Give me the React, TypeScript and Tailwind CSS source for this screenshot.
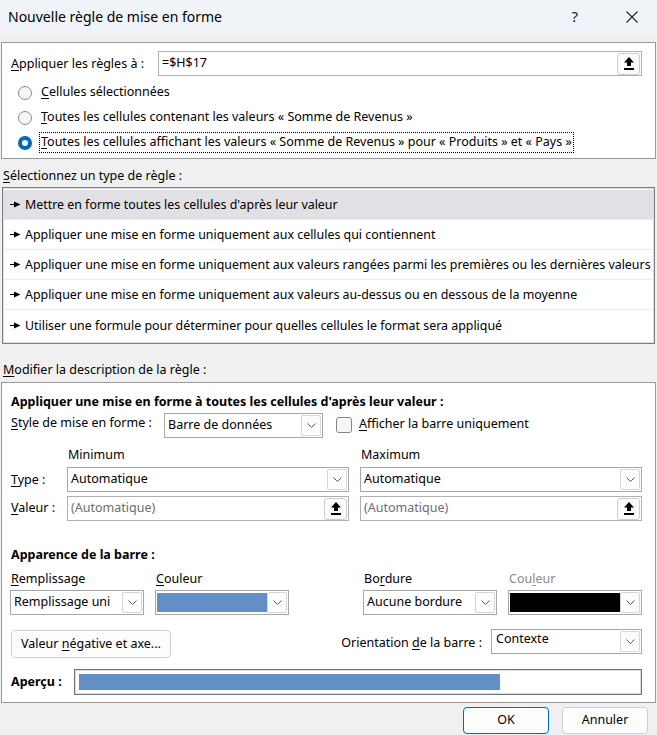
import React from "react";

const U = ({ children }: { children: React.ReactNode }) => <span className="underline underline-offset-2">{children}</span>;

function Chevron() {
  return (
    <svg width="9" height="5" viewBox="0 0 9 5">
      <polyline points="0.5,0.5 4.5,4.5 8.5,0.5" fill="none" stroke="#5a5a5a" strokeWidth="1" />
    </svg>
  );
}

function DropBtn() {
  return (
    <div className="mr-[1px] flex h-[21px] w-[20px] shrink-0 items-center justify-center rounded-[2px] border border-[#d6d6d6] bg-[#fdfdfd]">
      <Chevron />
    </div>
  );
}

function UploadIcon() {
  return (
    <svg width="10" height="13" viewBox="0 0 10 13">
      <polygon points="5,0 10,5.5 7,5.5 7,9 3,9 3,5.5 0,5.5" fill="#000" />
      <rect x="0" y="11" width="10" height="2" fill="#000" />
    </svg>
  );
}

function UploadBtn() {
  return (
    <div className="mr-[1px] flex h-[22px] w-[23px] shrink-0 items-center justify-center rounded-[3px] border border-[#cdcdcd] bg-[#fbfbfb]">
      <UploadIcon />
    </div>
  );
}

function Select({ className, children, pad = "pl-[3px]" }: { className: string; children: React.ReactNode; pad?: string }) {
  return (
    <div className={`flex h-[25px] shrink-0 items-center border border-[#a7a7a7] bg-white ${className}`}>
      <div className={`flex h-full min-w-0 flex-1 items-center whitespace-nowrap ${pad}`}>{children}</div>
      <DropBtn />
    </div>
  );
}

function RefInput({ className, text, muted }: { className: string; text: string; muted?: boolean }) {
  return (
    <div className={`flex h-[25px] shrink-0 items-center border border-[#b0b0b0] bg-white ${className}`}>
      <div className={`flex-1 pl-[3px] ${muted ? "text-[#6e6e6e]" : ""}`}>{text}</div>
      <UploadBtn />
    </div>
  );
}

function Radio({ checked }: { checked?: boolean }) {
  return checked ? (
    <div className="flex h-[14px] w-[14px] shrink-0 items-center justify-center rounded-full bg-[#0067c0]">
      <div className="h-[6px] w-[6px] rounded-full bg-white" />
    </div>
  ) : (
    <div className="h-[14px] w-[14px] shrink-0 rounded-full border border-[#8a8a8a] bg-[#f6f6f6]" />
  );
}

function RuleArrow() {
  return (
    <svg width="11" height="7" viewBox="0 0 11 7" className="shrink-0">
      <rect x="0" y="3" width="5" height="1" fill="#000" />
      <polygon points="4,0.5 10.5,3.5 4,6.5" fill="#000" />
    </svg>
  );
}

const rules = [
  "Mettre en forme toutes les cellules d'après leur valeur",
  "Appliquer une mise en forme uniquement aux cellules qui contiennent",
  "Appliquer une mise en forme uniquement aux valeurs rangées parmi les premières ou les dernières valeurs",
  "Appliquer une mise en forme uniquement aux valeurs au-dessus ou en dessous de la moyenne",
  "Utiliser une formule pour déterminer pour quelles cellules le format sera appliqué",
];

export default function App() {
  return (
    <div className="flex h-[735px] w-[657px] flex-col overflow-hidden bg-[#f0f0f0] font-['Noto_Sans',sans-serif] text-[12.5px] leading-none text-black">
      {/* title bar */}
      <div className="flex h-[33px] shrink-0 items-center bg-[#f0f4f9] pl-[8px]">
        <div className="text-[14px]">Nouvelle règle de mise en forme</div>
        <div className="ml-auto mr-[48px] text-[15px] text-[#222]">?</div>
        <svg width="12" height="12" viewBox="0 0 12 12" className="mr-[19px]">
          <path d="M0.5 0.5 L11.5 11.5 M11.5 0.5 L0.5 11.5" stroke="#222" strokeWidth="1.1" />
        </svg>
      </div>

      {/* apply to */}
      <div className="ml-[1px] mt-[9px] flex w-[655px] flex-col border border-[#999] bg-white pb-[3px]">
        <div className="mt-[8px] flex items-center pl-[9px]">
          <div className="w-[147px] translate-y-[1px]">
            <U>A</U>ppliquer les règles à :
          </div>
          <RefInput className="w-[484px]" text="=$H$17" />
        </div>
        <div className="mt-[4px] flex h-[25px] items-center pl-[16px]">
          <Radio />
          <span className="ml-[9px]">
            <U>C</U>ellules sélectionnées
          </span>
        </div>
        <div className="flex h-[25px] items-center pl-[16px]">
          <Radio />
          <span className="ml-[9px]">
            <U>T</U>outes les cellules contenant les valeurs « Somme de Revenus »
          </span>
        </div>
        <div className="flex h-[25px] items-center pl-[16px]">
          <Radio checked />
          <span className="ml-[7px] border border-dotted border-black px-[1px] py-[3px]">
            <U>T</U>outes les cellules affichant les valeurs « Somme de Revenus » pour « Produits » et « Pays »
          </span>
        </div>
      </div>

      <div className="mt-[7px] flex h-[21px] items-center pl-[3px]">
        <span>
          <U>S</U>électionnez un type de règle :
        </span>
      </div>
      <div className="ml-[2px] w-[653px] border border-[#7d7d7d]">
        <div className="border border-[#dedede] bg-white pb-[2px] pt-[1px]">
          {rules.map((r, i) => (
            <div
              key={i}
              className={`flex h-[30px] items-center gap-[4px] whitespace-nowrap pl-[6px] text-[12.4px] ${i === 0 ? "bg-[#e1e1e5]" : "bg-white"} ${i < 4 ? "border-b border-[#ececec]" : ""}`}
            >
              <RuleArrow />
              <span className="translate-y-[1px]">{r}</span>
            </div>
          ))}
        </div>
      </div>

      <div className="mt-[16px] flex h-[20px] items-center pl-[3px]">
        <span>
          <U>M</U>odifier la description de la règle :
        </span>
      </div>

      {/* description */}
      <div className="ml-[1px] mt-[2px] flex w-[655px] flex-col border border-[#999] bg-white pb-[7px]">
        <div className="mt-[10px] flex h-[18px] items-center pl-[9px] font-bold">
          <span>Appliquer une mise en forme à toutes les cellules d'après leur valeur :</span>
        </div>
        <div className="mt-[2px] flex items-center pl-[9px]">
          <div className="w-[153px] -translate-y-[2px]">
            <U>S</U>tyle de mise en forme :
          </div>
          <Select className="w-[159px]">
            <span>Barre de données</span>
          </Select>
          <div className="ml-[13px] h-[16px] w-[16px] -translate-y-[1px] rounded-[3px] border border-[#858585] bg-[#f7f7f7]" />
          <span className="ml-[7px] -translate-y-[1px]">
            <U>A</U>fficher la barre uniquement
          </span>
        </div>
        <div className="mt-[8px] flex h-[18px] items-center pl-[65px]">
          <div className="w-[293px] pl-[1px]">Minimum</div>
          <div className="pl-[1px]">Maximum</div>
        </div>
        <div className="mt-[3px] flex items-center pl-[9px]">
          <div className="w-[56px] translate-y-[1px]">
            <U>T</U>ype :
          </div>
          <Select className="w-[282px]">Automatique</Select>
          <Select className="ml-[11px] w-[282px]">Automatique</Select>
        </div>
        <div className="mt-[4px] flex items-center pl-[9px]">
          <div className="w-[56px]">
            <U>V</U>aleur :
          </div>
          <RefInput className="w-[282px]" text="(Automatique)" muted />
          <RefInput className="ml-[11px] w-[282px]" text="(Automatique)" muted />
        </div>

        <div className="mt-[25px] flex h-[18px] items-center pl-[9px] font-bold">Apparence de la barre :</div>
        <div className="mt-[6px] flex h-[18px] items-center pl-[8px]">
          <div className="w-[145px] pl-[1px]">
            <U>R</U>emplissage
          </div>
          <div className="w-[208px] pl-[1px]">
            <U>C</U>ouleur
          </div>
          <div className="w-[145px] pl-[1px]">
            Bo<U>r</U>dure
          </div>
          <div className="pl-[1px] text-[#8a8a8a]">
            Cou<U>l</U>eur
          </div>
        </div>
        <div className="mt-[2px] flex items-center pl-[8px]">
          <Select className="w-[134px]">Remplissage uni</Select>
          <Select className="ml-[11px] w-[134px]" pad="pl-[1px] py-[2px]">
            <div className="h-full w-full bg-[#638ec6]" />
          </Select>
          <Select className="ml-[74px] w-[134px]">Aucune bordure</Select>
          <Select className="ml-[11px] w-[134px]" pad="pl-[1px] py-[2px]">
            <div className="h-full w-full bg-black" />
          </Select>
        </div>

        <div className="mt-[14px] flex items-start pl-[9px] pr-[13px]">
          <div className="mt-[1px] flex h-[28px] w-[160px] items-center justify-center rounded-[4px] border border-[#d0d0d0] bg-[#fdfdfd]">
            <span>
              Valeur <U>n</U>égative et axe...
            </span>
          </div>
          <div className="ml-auto mr-[9px] flex h-[28px] items-center">
            <span>
              Orientation <U>d</U>e la barre :
            </span>
          </div>
          <Select className="w-[151px]" pad="pl-[4px] pb-[4px]">
            Contexte
          </Select>
        </div>

        <div className="mt-[11px] flex items-center pl-[9px] pr-[13px]">
          <div className="w-[63px] font-bold">Aperçu :</div>
          <div className="h-[26px] flex-1 border border-[#737373]">
            <div className="h-full border border-[#dcdcdc] bg-white p-[3px]">
              <div className="h-full w-[421px] bg-[#638ec6]" />
            </div>
          </div>
        </div>
      </div>

      <div className="mt-[4px] flex justify-end gap-[13px] pr-[9px]">
        <div className="flex h-[27px] w-[86px] items-center justify-center rounded-[4px] border border-[#0067c0] bg-[#fdfdfd]">
          OK
        </div>
        <div className="flex h-[27px] w-[86px] items-center justify-center rounded-[4px] border border-[#d0d0d0] bg-[#fdfdfd]">
          Annuler
        </div>
      </div>
    </div>
  );
}
